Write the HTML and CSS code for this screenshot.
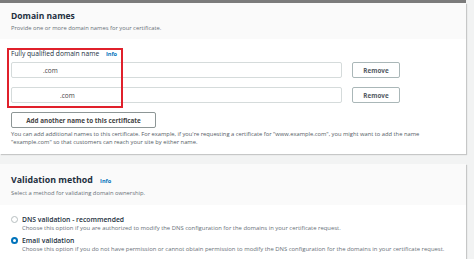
FILE: index.html
```
<!DOCTYPE html>
<html lang="en">
<head>
    <meta charset="UTF-8">
    <meta name="viewport" content="width=device-width, initial-scale=1.0">
    <title>Request certificate</title>
    <link rel="stylesheet" href="styles.css">
</head>
<body>
    <div class="topbar"></div>
    <div class="page">
        <div class="card">
            <div class="card-header">
                <h2>Domain names</h2>
                <p class="subtitle">Provide one or more domain names for your certificate.</p>
            </div>
            <div class="card-body">
                <div class="highlight"></div>
                <label class="field-label">Fully qualified domain name <a href="#" class="info">Info</a></label>
                <div class="domain-row">
                    <input type="text" class="domain-input first" value=".com">
                    <button class="btn">Remove</button>
                </div>
                <div class="domain-row">
                    <input type="text" class="domain-input second" value=".com">
                    <button class="btn">Remove</button>
                </div>
                <button class="btn add-btn">Add another name to this certificate</button>
                <p class="hint">You can add additional names to this certificate. For example, if you're requesting a certificate for "www.example.com", you might want to add the name "example.com" so that customers can reach your site by either name.</p>
            </div>
        </div>

        <div class="card">
            <div class="card-header second-header">
                <h2 class="big">Validation method <a href="#" class="info">Info</a></h2>
                <p class="subtitle">Select a method for validating domain ownership.</p>
            </div>
            <div class="card-body options">
                <div class="option">
                    <span class="radio"></span>
                    <div>
                        <div class="option-title">DNS validation - recommended</div>
                        <div class="option-desc">Choose this option if you are authorized to modify the DNS configuration for the domains in your certificate request.</div>
                    </div>
                </div>
                <div class="option">
                    <span class="radio checked"></span>
                    <div>
                        <div class="option-title">Email validation</div>
                        <div class="option-desc">Choose this option if you do not have permission or cannot obtain permission to modify the DNS configuration for the domains in your certificate request.</div>
                    </div>
                </div>
            </div>
        </div>
    </div>
</body>
</html>
```

FILE: styles.css
```
body, html {
    margin: 0;
    padding: 0;
    font-family: 'Open Sans', 'Noto Sans', sans-serif;
    background-color: #f2f3f3;
    color: #232f3e;
    overflow: hidden;
}
.topbar {
    width: 466px;
    height: 3px;
    background-color: #7b7b7b;
}
.page {
    width: 466px;
    display: flex;
    flex-direction: column;
    gap: 10px;
}
.card {
    background-color: white;
    box-shadow: 1px 1px 1px rgba(0, 0, 0, 0.18);
}
.card-header {
    background-color: #fafafa;
    padding: 7px 11px 7px;
}
.second-header {
    padding: 10px 11px 8px;
}
h2 {
    margin: 0;
    font-size: 8.5px;
    line-height: 12px;
    font-weight: bold;
}
h2.big {
    font-size: 8.8px;
}
.subtitle {
    margin: 2px 0 0;
    font-size: 5.8px;
    line-height: 8px;
    color: #687078;
}
.info {
    color: #0073bb;
    font-size: 5.6px;
    font-weight: bold;
    text-decoration: none;
    margin-left: 5px;
}
.card-body {
    position: relative;
    padding: 10px 11px 8px;
    display: flex;
    flex-direction: column;
    align-items: flex-start;
}
.highlight {
    position: absolute;
    left: 7px;
    top: 9px;
    width: 112px;
    height: 56px;
    border: 2px solid #e0202b;
}
.field-label {
    font-size: 6.7px;
    line-height: 9px;
    margin-bottom: 3px;
}
.domain-row {
    display: flex;
    gap: 10px;
    margin-bottom: 9px;
}
.domain-input {
    width: 331px;
    height: 16px;
    box-sizing: border-box;
    border: 1px solid #d5dbdb;
    border-radius: 2px;
    font-family: inherit;
    font-size: 6.5px;
    color: #444;
    padding: 0 0 0 31px;
    margin: 0;
}
.domain-input.second {
    padding-left: 48px;
}
.btn {
    height: 16px;
    box-sizing: border-box;
    width: 48px;
    padding: 0;
    border: 1px solid #aab7b8;
    border-radius: 2px;
    background-color: white;
    font-family: inherit;
    font-size: 6.3px;
    font-weight: bold;
    color: #545b64;
}
.add-btn {
    width: 145px;
    color: #444;
    border-color: #8d9696;
}
.hint {
    margin: 2px 0 0;
    width: 425px;
    font-size: 5.77px;
    line-height: 8px;
    color: #545b64;
}
.options {
    gap: 4px;
    padding-top: 10px;
    padding-bottom: 6px;
}
.option {
    display: flex;
    gap: 4px;
}
.radio {
    width: 7px;
    height: 7px;
    box-sizing: border-box;
    border: 1px solid #b6bec0;
    border-radius: 50%;
    margin-top: 1px;
    flex-shrink: 0;
}
.radio.checked {
    border: 2px solid #0073bb;
}
.option-title {
    font-size: 6.8px;
    line-height: 9px;
    font-weight: 600;
}
.option-desc {
    font-size: 5.9px;
    line-height: 8px;
    color: #687078;
}
```
